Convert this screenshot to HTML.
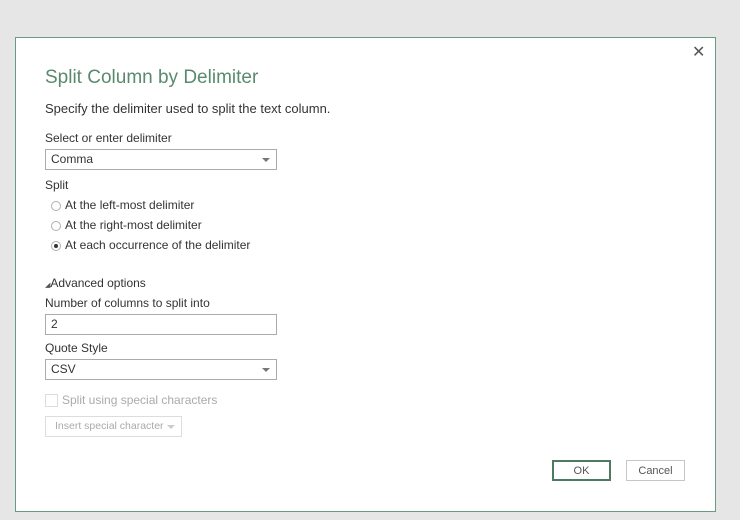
<!DOCTYPE html>
<html><head><style>
body{margin:0;width:740px;height:520px;background:#e6e6e6;font-family:"Liberation Sans",sans-serif;position:relative;overflow:hidden}
.dlg{position:absolute;left:15px;top:37px;width:699px;height:473px;background:#fff;border:1px solid #6a9a80}
.a{position:absolute;white-space:nowrap}
.t{font-size:12px;color:#333}
.box{position:absolute;border:1px solid #ababab;background:#fff;width:232px;font-size:12px;color:#333;line-height:19px;box-sizing:border-box;padding-left:5px;height:21px}
.arr{position:absolute;right:6px;top:8px;width:0;height:0;border-left:4px solid transparent;border-right:4px solid transparent;border-top:4px solid #777}
.rad{position:absolute;width:8px;height:8px;border:1px solid #b0b0b0;border-radius:50%}
.btn{position:absolute;width:59px;height:21px;box-sizing:border-box;font-size:11px;color:#555;text-align:center;line-height:19px;background:#fff}
</style></head><body>
<div class="dlg"></div>
<div class="a" style="left:692px;top:42px;font-size:16px;color:#555">✕</div>
<div class="a" style="left:45px;top:67px;font-size:19px;color:#5a8a6e">Split Column by Delimiter</div>
<div class="a t" style="left:45px;top:101px;font-size:13px">Specify the delimiter used to split the text column.</div>
<div class="a t" style="left:45px;top:131px">Select or enter delimiter</div>
<div class="box" style="left:45px;top:149px">Comma<div class="arr"></div></div>
<div class="a t" style="left:45px;top:178px">Split</div>
<div class="rad" style="left:51px;top:201px"></div><div class="a t" style="left:65px;top:198px">At the left-most delimiter</div>
<div class="rad" style="left:51px;top:221px"></div><div class="a t" style="left:65px;top:218px">At the right-most delimiter</div>
<div class="rad" style="left:51px;top:241px"><div style="position:absolute;left:2px;top:2px;width:4px;height:4px;border-radius:50%;background:#333"></div></div><div class="a t" style="left:65px;top:238px">At each occurrence of the delimiter</div>
<div class="a t" style="left:45px;top:276px"><span style="font-size:7px;color:#555">◢</span>Advanced options</div>
<div class="a t" style="left:45px;top:296px">Number of columns to split into</div>
<div class="box" style="left:45px;top:314px">2</div>
<div class="a t" style="left:45px;top:341px">Quote Style</div>
<div class="box" style="left:45px;top:359px">CSV<div class="arr"></div></div>
<div style="position:absolute;left:45px;top:394px;width:11px;height:11px;border:1px solid #ddd"></div>
<div class="a t" style="left:62px;top:393px;color:#aaa">Split using special characters</div>
<div style="position:absolute;left:45px;top:416px;width:137px;height:21px;border:1px solid #ddd;box-sizing:border-box;font-size:10.5px;color:#aaa;line-height:19px;padding-left:9px">Insert special character<div class="arr" style="right:6px;border-top-color:#ccc"></div></div>
<div class="btn" style="left:552px;top:460px;border:2px solid #4e7a62">OK</div>
<div class="btn" style="left:626px;top:460px;border:1px solid #c6c6c6;line-height:20px">Cancel</div>
</body></html>
